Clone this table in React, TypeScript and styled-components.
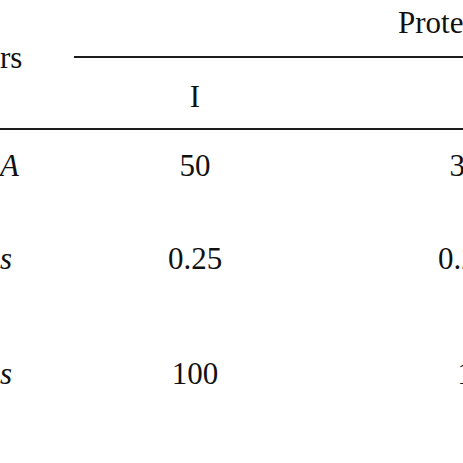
import React from 'react'
import styled, { createGlobalStyle } from 'styled-components'

const GlobalStyle = createGlobalStyle`
    html, body {
        margin: 0;
        padding: 0;
        background: #ffffff;
        overflow: hidden;
    }
`

const ruleColor = '#1c1c1c'

// the table is wider than the frame, the frame shows its left part
const Table = styled.table`
    border-collapse: collapse;
    table-layout: fixed;
    width: 614px;
    font-family: 'Liberation Serif', 'Times New Roman', serif;
    font-size: 31px;
    line-height: 31px;
    color: #111111;
`

const Col = styled.col<{ $width: number }>`
    width: ${({ $width }) => $width}px;
`

const Row = styled.tr<{ $height: number }>`
    height: ${({ $height }) => $height}px;
`

const Cell = styled.td<{ $top: number; $rule?: boolean }>`
    padding: ${({ $top }) => $top}px 0 0 0;
    vertical-align: top;
    text-align: center;
    white-space: nowrap;
    font-weight: normal;
    border-bottom: ${({ $rule }) => ($rule ? `2px solid ${ruleColor}` : 'none')};
`

const HeadCell = styled(Cell).attrs({ as: 'th' })``

const LabelHead = styled(HeadCell)`
    text-align: left;
`

const GroupHead = styled(HeadCell)`
    text-align: left;
    padding-left: 324px;
`

const LabelCell = styled(Cell)`
    text-align: left;
`

const Symbol = styled.i`
    font-style: italic;
`

const rows = [
    { label: 'A', a: '50', b: '35', height: 94 },
    { label: 's', a: '0.25', b: '0.20', height: 115 },
    { label: 's', a: '100', b: '1', height: 124 },
]

export default function App() {
    return (
        <>
            <GlobalStyle />
            <Table>
                <colgroup>
                    <Col $width={74} />
                    <Col $width={242} />
                    <Col $width={298} />
                </colgroup>
                <tbody>
                    <Row $height={57}>
                        <LabelHead rowSpan={2} $top={42} $rule>
                            rs
                        </LabelHead>
                        <GroupHead colSpan={2} $top={7} $rule>
                            Protein
                        </GroupHead>
                    </Row>
                    <Row $height={72}>
                        <HeadCell $top={23} $rule>
                            I
                        </HeadCell>
                        <HeadCell $top={23} $rule />
                    </Row>
                    {rows.map((r, i) => (
                        <Row key={i} $height={r.height}>
                            <LabelCell $top={20}>
                                <Symbol>{r.label}</Symbol>
                            </LabelCell>
                            <Cell $top={20}>{r.a}</Cell>
                            <Cell $top={20}>{r.b}</Cell>
                        </Row>
                    ))}
                </tbody>
            </Table>
        </>
    )
}
